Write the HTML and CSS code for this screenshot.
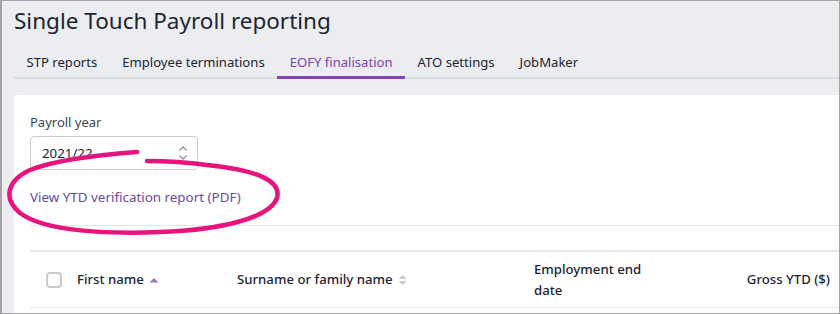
FILE: index.html
```html
<!DOCTYPE html>
<html lang="en">
<head>
    <meta charset="UTF-8">
    <title>Single Touch Payroll reporting</title>
    <link rel="stylesheet" href="styles.css">
</head>
<body>
    <div class="frame">
        <h1>Single Touch Payroll reporting</h1>
        <nav class="tabs">
            <a class="tab">STP reports</a>
            <a class="tab">Employee terminations</a>
            <a class="tab active">EOFY finalisation</a>
            <a class="tab">ATO settings</a>
            <a class="tab">JobMaker</a>
        </nav>

        <div class="card">
            <div class="field">
                <label class="field-label">Payroll year</label>
                <div class="select">
                    <span>2021/22</span>
                    <svg class="chevrons" width="10" height="16" viewBox="0 0 10 16" fill="none" stroke="currentColor" stroke-width="1.3">
                        <polyline points="1.5,5.5 5,2 8.5,5.5"></polyline>
                        <polyline points="1.5,10.5 5,14 8.5,10.5"></polyline>
                    </svg>
                </div>
            </div>
            <a class="report-link">View YTD verification report (PDF)</a>

            <div class="table-head">
                <div class="cell check"><span class="checkbox"></span></div>
                <div class="cell">First name
                    <svg class="sort" width="10" height="12" viewBox="0 0 10 12"><polygon points="0.5,8.5 5,4 9.5,8.5" fill="#a070c8"></polygon></svg>
                </div>
                <div class="cell">Surname or family name
                    <svg class="sort" width="9" height="12" viewBox="0 0 9 12"><polygon points="0.5,5 4.5,1 8.5,5" fill="#c8cbd0"></polygon><polygon points="0.5,7 4.5,11 8.5,7" fill="#c8cbd0"></polygon></svg>
                </div>
                <div class="cell wrap">Employment end date</div>
                <div class="cell right">Gross YTD ($)</div>
            </div>
        </div>

        <!-- hand-drawn highlight around the report link -->
        <svg class="scribble" width="840" height="314" viewBox="0 0 840 314" fill="none">
            <path d="M137,152 C110,154 60,158 30,170 C8,180 2,198 20,213 C45,232 110,234 160,232 C220,230 270,218 277,198 C282,180 255,170 207,165 C185,162 165,161 147,161"
                  stroke="#e6147c" stroke-width="4.5" stroke-linecap="round"></path>
        </svg>
    </div>
</body>
</html>
```

FILE: styles.css
```css
* {
    box-sizing: border-box;
    margin: 0;
    padding: 0;
}

body {
    font-family: "Noto Sans", "Open Sans", sans-serif;
    color: #1b2530;
}

.frame {
    position: relative;
    width: 840px;
    height: 314px;
    overflow: hidden;
    background: #ebedf0;
    border: 1px solid #a4a4a4;
    border-left-width: 2px;
    padding: 4px 0 0 12px;
}

h1 {
    font-size: 22.5px;
    font-weight: 400;
    line-height: 32px;
    color: #1b2530;
}

.tabs {
    display: flex;
    margin-top: 15px;
    border-bottom: 2px solid #d9dce0;
}

.tab {
    padding: 0 12.5px 4px;
    font-size: 13.1px;
    line-height: 20px;
    color: #1b2530;
    border-bottom: 3px solid transparent;
    margin-bottom: -2px;
}

.tab.active {
    color: #8241b0;
    border-bottom-color: #8544b4;
}

.card {
    margin-top: 16px;
    margin-right: -20px;
    background: white;
    border-radius: 4px;
    padding: 17px 0 0 16px;
    height: 240px;
}

.field-label {
    display: block;
    font-size: 13px;
    line-height: 20px;
    color: #3b4654;
    margin-bottom: 4px;
}

.select {
    width: 168px;
    height: 34px;
    border: 1px solid #c9ccd1;
    border-radius: 4px;
    display: flex;
    align-items: center;
    justify-content: space-between;
    padding: 0 9px 0 11px;
    font-size: 13.3px;
}

.chevrons {
    color: #8b9099;
}

.report-link {
    display: block;
    padding: 17px 0 18px;
    font-size: 13.4px;
    line-height: 20px;
    color: #6a4a9e;
    border-bottom: 1px solid #e4e6e9;
}

.table-head {
    display: grid;
    grid-template-columns: 47px 160px 297px 130px 1fr;
    align-items: center;
    margin-top: 24px;
    height: 58px;
    border-top: 2px solid #e6e8eb;
    border-bottom: 1px solid #e4e6e9;
    padding-right: 29px;
    font-size: 13.2px;
    font-weight: 500;
}

.cell {
    display: flex;
    align-items: center;
    gap: 5px;
    line-height: 21px;
}

.cell.check {
    padding-left: 16px;
}

.cell.wrap {
    width: 116px;
}

.cell.right {
    justify-content: flex-end;
}

.checkbox {
    width: 16px;
    height: 16px;
    border: 2px solid #c7cacf;
    border-radius: 4px;
}

.scribble {
    position: absolute;
    top: -1px;
    left: -2px;
    pointer-events: none;
}
```
